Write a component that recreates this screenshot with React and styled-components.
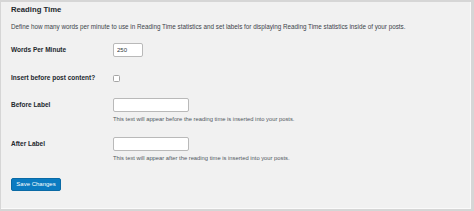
import styled, { createGlobalStyle } from "styled-components";

const GlobalStyle = createGlobalStyle`
  html, body {
    margin: 0;
    padding: 0;
    background: #d6d6d6;
  }
  body {
    font-family: "Liberation Sans", Arial, sans-serif;
    color: #23282d;
  }
`;

const rows = [
  { label: "Before Label", help: "This text will appear before the reading time is inserted into your posts.", gap: 16 },
  { label: "After Label", help: "This text will appear after the reading time is inserted into your posts.", gap: 14 },
];

const App = () => {
  return (
    <>
      <GlobalStyle />
      <Panel>
        <Heading>Reading Time</Heading>
        <Intro>
          Define how many words per minute to use in Reading Time statistics and set labels for
          displaying Reading Time statistics inside of your posts.
        </Intro>
        <Row $gap={12} $center>
          <Label>Words Per Minute</Label>
          <Field>
            <TextInput $width={30} defaultValue="250" />
          </Field>
        </Row>
        <Row $gap={17} $center>
          <Label>Insert before post content?</Label>
          <Field>
            <Checkbox />
          </Field>
        </Row>
        {rows.map((r) => (
          <Row key={r.label} $gap={r.gap}>
            <Label $pad>{r.label}</Label>
            <Field>
              <TextInput $width={76} />
              <Help>{r.help}</Help>
            </Field>
          </Row>
        ))}
        <SaveButton>Save Changes</SaveButton>
      </Panel>
    </>
  );
};

const Panel = styled.section`
  box-sizing: border-box;
  margin: 2px 3px 0 1px;
  height: 207px;
  padding: 0 10px;
  background: #f1f1f1;
  border-right: 1px solid #fafafa;
  border-bottom: 1px solid #fafafa;
  overflow: hidden;
`;

const Heading = styled.h2`
  margin: 3px 0 0;
  font-size: 7.7px;
  line-height: 10px;
  font-weight: 700;
  color: #23282d;
`;

const Intro = styled.p`
  margin: 8px 0 0;
  font-size: 6.3px;
  line-height: 8px;
  color: #3c434a;
  white-space: nowrap;
`;

const Row = styled.div`
  display: grid;
  grid-template-columns: 102px 1fr;
  align-items: ${(p) => (p.$center ? "center" : "start")};
  margin-top: ${(p) => p.$gap}px;
`;

const Label = styled.div`
  font-size: 6.5px;
  line-height: 8px;
  font-weight: 700;
  color: #23282d;
  padding-top: ${(p) => (p.$pad ? "3px" : "0")};
`;

const Field = styled.div`
  display: flex;
  flex-direction: column;
  align-items: flex-start;
`;

const TextInput = styled.input`
  box-sizing: border-box;
  width: ${(p) => p.$width}px;
  height: 14px;
  margin: 0;
  padding: 0 3px;
  border: 1px solid #b9b9b9;
  border-radius: 2px;
  background: #fff;
  font-family: "Liberation Sans", Arial, sans-serif;
  font-size: 6px;
  color: #32373c;
  outline: none;
`;

const Checkbox = styled.span`
  box-sizing: border-box;
  display: block;
  width: 7px;
  height: 7px;
  border: 1px solid #a5a5a5;
  border-radius: 1.5px;
  background: #fff;
`;

const Help = styled.p`
  margin: 3px 0 0;
  font-size: 5.8px;
  line-height: 8px;
  color: #50575e;
  white-space: nowrap;
`;

const SaveButton = styled.button`
  display: block;
  box-sizing: border-box;
  margin-top: 16px;
  width: 50px;
  height: 13px;
  padding: 0;
  border: 1px solid #0a6aa5;
  border-radius: 2px;
  background: #0b7bc1;
  color: #fff;
  font-family: "Liberation Sans", Arial, sans-serif;
  font-size: 6px;
  line-height: 11px;
`;

export default App;
